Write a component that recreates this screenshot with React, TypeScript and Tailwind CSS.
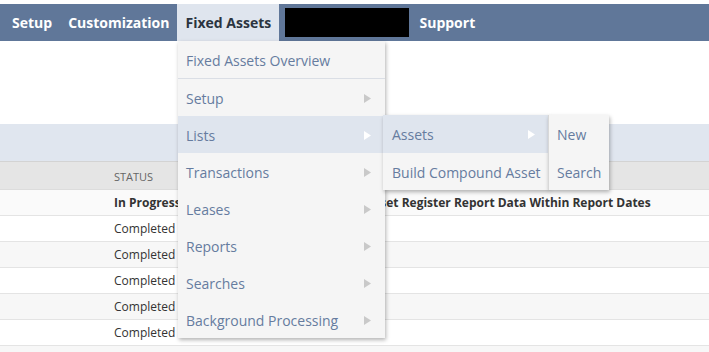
import React from "react";

const Arrow = ({ white }: { white?: boolean }) => (
  <svg width="7" height="9" viewBox="0 0 7 9" className="shrink-0">
    <path d="M0 0 L7 4.5 L0 9 Z" fill={white ? "#ffffff" : "#c9c9c9"} />
  </svg>
);

const mainItems: { label: string; arrow: boolean; active?: boolean; sep?: boolean }[] = [
  { label: "Fixed Assets Overview", arrow: false, sep: true },
  { label: "Setup", arrow: true },
  { label: "Lists", arrow: true, active: true },
  { label: "Transactions", arrow: true },
  { label: "Leases", arrow: true },
  { label: "Reports", arrow: true },
  { label: "Searches", arrow: true },
  { label: "Background Processing", arrow: true },
];

const rows = [
  { status: "In Progress", desc: "Asset Register Report Data Within Report Dates", bold: true, bg: "bg-[#fafafa]" },
  { status: "Completed", desc: "", bold: false, bg: "bg-white" },
  { status: "Completed", desc: "", bold: false, bg: "bg-[#f7f7f7]" },
  { status: "Completed", desc: "", bold: false, bg: "bg-white" },
  { status: "Completed", desc: "", bold: false, bg: "bg-[#f7f7f7]" },
  { status: "Completed", desc: "", bold: false, bg: "bg-white" },
];

export default function App() {
  return (
    <div
      className="relative w-[709px] h-[352px] overflow-hidden bg-white"
      style={{ fontFamily: '"Open Sans", "Liberation Sans", sans-serif' }}
    >
      {/* nav */}
      <div className="mt-[4px] h-[37px] bg-[#607799] flex items-stretch pl-[4px] text-[14px] font-bold text-white">
        <div className="px-[8px] flex items-center">Setup</div>
        <div className="px-[8px] flex items-center">Customization</div>
        <div className="w-[102px] pl-[8px] flex items-center bg-[#dfe5ee] text-[#2b3440]">Fixed Assets</div>
        <div className="ml-[6px] my-[4px] w-[124px] bg-black" />
        <div className="ml-[10px] flex items-center">Support</div>
      </div>

      {/* white area */}
      <div className="h-[83px]" />
      {/* band */}
      <div className="h-[38px] bg-[#e0e6ef] border-b border-[#d3d3d3]" />
      {/* header */}
      <div className="h-[28px] bg-[#e5e5e5] flex items-center pt-[3px] pl-[114px] text-[11px] text-[#666] border-b border-[#dcdcdc]">
        STATUS
      </div>
      {rows.map((r, i) => (
        <div
          key={i}
          className={`h-[26px] flex items-center pt-[1px] border-b border-[#e4e4e4] text-[12px] text-[#333] ${r.bg} ${
            r.bold ? "font-bold" : ""
          }`}
        >
          <div className="pl-[114px] w-[366px] shrink-0 whitespace-nowrap">{r.status}</div>
          <div className="whitespace-nowrap">{r.desc}</div>
        </div>
      ))}
      <div className="h-[20px] bg-[#f7f7f7]" />

      {/* main dropdown */}
      <div className="absolute left-[178px] top-[41px] w-[207px] bg-[#f5f5f5] shadow-[1px_2px_4px_rgba(0,0,0,0.3)] text-[14px] text-[#667c9f]">
        {mainItems.map((it) => (
          <div
            key={it.label}
            className={`flex items-center justify-between pl-[8px] pr-[14px] pt-[1px] ${
              it.active ? "bg-[#dfe5ee]" : ""
            } ${it.sep ? "h-[38px] border-b border-[#dadee5]" : "h-[37px]"}`}
          >
            <span className="whitespace-nowrap">{it.label}</span>
            {it.arrow && <Arrow white={it.active} />}
          </div>
        ))}
      </div>

      {/* second level */}
      <div className="absolute left-[383px] top-[115px] w-[166px] bg-[#f5f5f5] shadow-[1px_2px_4px_rgba(0,0,0,0.3)] text-[14px] text-[#667c9f]">
        <div className="h-[38px] flex items-center justify-between pl-[9px] pr-[14px] pt-[1px] bg-[#dfe5ee]">
          <span>Assets</span>
          <Arrow white />
        </div>
        <div className="h-[37px] flex items-center pl-[9px] pt-[1px] whitespace-nowrap">Build Compound Asset</div>
      </div>

      {/* third level */}
      <div className="absolute left-[548px] top-[115px] w-[61px] bg-[#f5f5f5] shadow-[1px_2px_4px_rgba(0,0,0,0.3)] border-l border-[#d8d8d8] text-[14px] text-[#667c9f]">
        <div className="h-[38px] flex items-center pl-[8px] pt-[1px]">New</div>
        <div className="h-[37px] flex items-center pl-[8px] pt-[1px]">Search</div>
      </div>
    </div>
  );
}
